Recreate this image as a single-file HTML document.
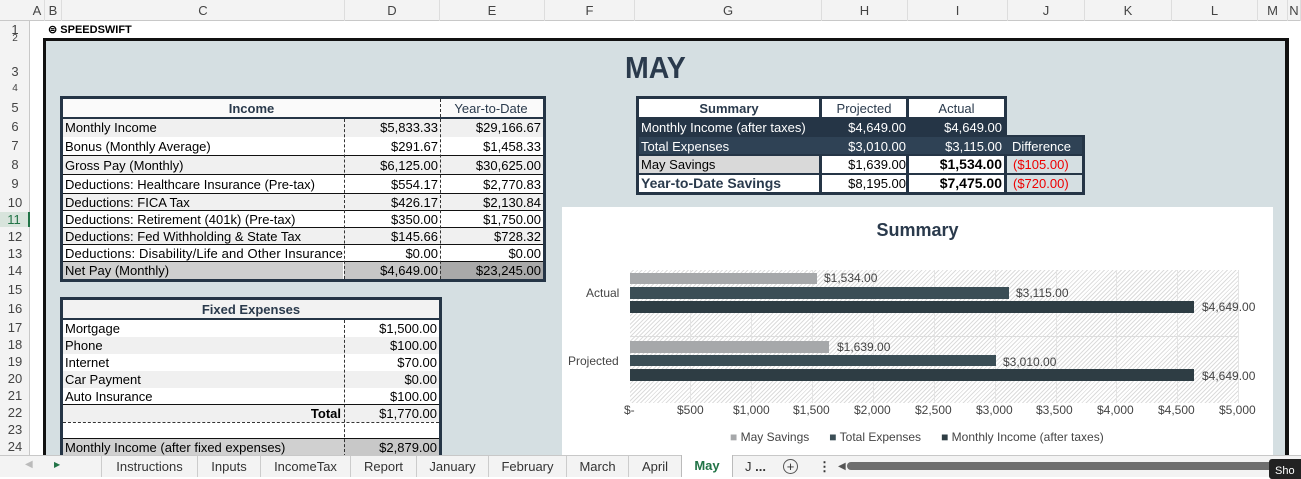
<!DOCTYPE html>
<html><head><meta charset="utf-8"><style>
*{margin:0;padding:0;box-sizing:border-box}
body{width:1301px;height:477px;overflow:hidden;background:#fff;font-family:"Liberation Sans",Arial,sans-serif;position:relative;font-size:13px;color:#000}
.a{position:absolute;white-space:nowrap}
.ch{position:absolute;top:0;height:21px;line-height:21px;text-align:center;color:#444;font-size:13px;border-right:1px solid #ddd}
.rn{position:absolute;left:0;width:30px;text-align:center;color:#444;font-size:13px}
.r{position:absolute;height:19px;line-height:19px;font-size:13px}
.t{position:absolute;white-space:nowrap;line-height:17px;font-size:13px}
.num{text-align:right}
.nar{font-family:"Liberation Sans Narrow","Liberation Sans",sans-serif}
</style></head><body>
<!-- column header -->
<div class="a" style="left:0;top:0;width:1301px;height:21px;background:#f3f3f3;border-bottom:1px solid #c8c8c8"></div>
<div class="ch" style="left:30px;width:15px">A</div>
<div class="ch" style="left:45px;width:17px">B</div>
<div class="ch" style="left:62px;width:283px">C</div>
<div class="ch" style="left:345px;width:95px">D</div>
<div class="ch" style="left:440px;width:105px">E</div>
<div class="ch" style="left:545px;width:90px">F</div>
<div class="ch" style="left:635px;width:187px">G</div>
<div class="ch" style="left:822px;width:86px">H</div>
<div class="ch" style="left:908px;width:100px">I</div>
<div class="ch" style="left:1008px;width:77px">J</div>
<div class="ch" style="left:1085px;width:87px">K</div>
<div class="ch" style="left:1172px;width:86px">L</div>
<div class="ch" style="left:1258px;width:30px">M</div>
<div class="ch" style="left:1288px;width:13px">N</div>
<!-- row numbers -->
<div class="a" style="left:0;top:21px;width:30px;height:434px;background:#f3f3f3;border-right:1px solid #c8c8c8"></div>
<div class="rn" style="top:22px">1</div><div class="rn" style="top:33px;font-size:10px;height:8px;overflow:hidden">2</div>
<div class="rn" style="top:64px">3</div><div class="rn" style="top:83px;font-size:10px;height:8px;overflow:hidden">4</div>
<div class="rn" style="top:100px">5</div><div class="rn" style="top:119px">6</div><div class="rn" style="top:138px">7</div><div class="rn" style="top:157px">8</div><div class="rn" style="top:176px">9</div><div class="rn" style="top:195px">10</div>
<div class="rn" style="top:212px;color:#217346;background:#d8e4dc;border-right:2px solid #217346">11</div>
<div class="rn" style="top:229px">12</div><div class="rn" style="top:246px">13</div><div class="rn" style="top:263px">14</div><div class="rn" style="top:282px">15</div><div class="rn" style="top:301px">16</div><div class="rn" style="top:320px">17</div><div class="rn" style="top:337px">18</div><div class="rn" style="top:354px">19</div><div class="rn" style="top:371px">20</div><div class="rn" style="top:388px">21</div><div class="rn" style="top:405px">22</div><div class="rn" style="top:422px">23</div><div class="rn" style="top:439px">24</div>
<!-- logo -->
<div class="a" style="left:48px;top:23px;font-size:11px;font-weight:bold">&#x229C; SPEEDSWIFT</div>
<!-- frame -->
<div class="a" style="left:43px;top:38px;width:1246px;height:430px;background:#d5dfe2;border:3px solid #111;border-bottom:none"></div>
<div class="a" style="left:625px;top:50px;font-size:31px;font-weight:bold;color:#2a3a4c;transform:scaleX(0.92);transform-origin:left">MAY</div>

<!-- Income table -->
<div class="a" style="left:60px;top:96px;width:486px;height:186px;background:#253546"></div>
<div class="a" style="left:63px;top:99px;width:480px;height:18px;background:#fafafa"></div>
<div class="t" style="left:63px;top:100px;width:377px;text-align:center;font-weight:bold;color:#2a3a4c">Income</div>
<div class="t" style="left:441px;top:100px;width:100px;text-align:center;color:#2a3a4c">Year-to-Date</div>
<div class="a" style="left:440px;top:99px;height:18px;border-left:1px dashed #333"></div>
<div class="a" style="left:63px;top:119px;width:480px;height:160px;background:#fff"></div>
<div class="a" style="left:63px;top:119px;width:480px;height:18px;background:#f0f0f0"></div>
<div class="a" style="left:63px;top:156px;width:480px;height:19px;background:#f0f0f0"></div>
<div class="a" style="left:63px;top:194px;width:480px;height:17px;background:#f0f0f0"></div>
<div class="a" style="left:63px;top:228px;width:480px;height:17px;background:#f0f0f0"></div>
<div class="a" style="left:63px;top:262px;width:280px;height:17px;background:#cfcfcf"></div>
<div class="a" style="left:344px;top:262px;width:96px;height:17px;background:#c6c6c6"></div>
<div class="a" style="left:440px;top:262px;width:103px;height:17px;background:#a9a9a9"></div>
<div class="a" style="left:63px;top:155px;width:480px;border-top:1px solid #111"></div>
<div class="a" style="left:63px;top:174px;width:480px;border-top:1px solid #111"></div>
<div class="a" style="left:63px;top:193px;width:480px;border-top:1px solid #111"></div>
<div class="a" style="left:63px;top:210px;width:480px;border-top:1px solid #111"></div>
<div class="a" style="left:63px;top:227px;width:480px;border-top:1px solid #111"></div>
<div class="a" style="left:63px;top:244px;width:480px;border-top:1px solid #111"></div>
<div class="a" style="left:63px;top:261px;width:480px;border-top:1px solid #111"></div>
<div class="a" style="left:344px;top:119px;height:160px;border-left:1px dashed #333"></div>
<div class="a" style="left:440px;top:119px;height:160px;border-left:1px dashed #333"></div>
<div class="t" style="left:65px;top:119px">Monthly Income</div><div class="t num" style="left:344px;top:119px;width:94px">$5,833.33</div><div class="t num" style="left:441px;top:119px;width:100px">$29,166.67</div>
<div class="t" style="left:65px;top:138px">Bonus (Monthly Average)</div><div class="t num" style="left:344px;top:138px;width:94px">$291.67</div><div class="t num" style="left:441px;top:138px;width:100px">$1,458.33</div>
<div class="t" style="left:65px;top:157px">Gross Pay (Monthly)</div><div class="t num" style="left:344px;top:157px;width:94px">$6,125.00</div><div class="t num" style="left:441px;top:157px;width:100px">$30,625.00</div>
<div class="t" style="left:65px;top:176px">Deductions: Healthcare Insurance (Pre-tax)</div><div class="t num" style="left:344px;top:176px;width:94px">$554.17</div><div class="t num" style="left:441px;top:176px;width:100px">$2,770.83</div>
<div class="t" style="left:65px;top:194px">Deductions: FICA Tax</div><div class="t num" style="left:344px;top:194px;width:94px">$426.17</div><div class="t num" style="left:441px;top:194px;width:100px">$2,130.84</div>
<div class="t" style="left:65px;top:211px">Deductions: Retirement (401k) (Pre-tax)</div><div class="t num" style="left:344px;top:211px;width:94px">$350.00</div><div class="t num" style="left:441px;top:211px;width:100px">$1,750.00</div>
<div class="t" style="left:65px;top:228px">Deductions: Fed Withholding &amp; State Tax</div><div class="t num" style="left:344px;top:228px;width:94px">$145.66</div><div class="t num" style="left:441px;top:228px;width:100px">$728.32</div>
<div class="t" style="left:65px;top:245px;width:278px;overflow:hidden;letter-spacing:0.15px">Deductions: Disability/Life and Other Insurance</div><div class="t num" style="left:344px;top:245px;width:94px">$0.00</div><div class="t num" style="left:441px;top:245px;width:100px">$0.00</div>
<div class="t" style="left:65px;top:262px">Net Pay (Monthly)</div><div class="t num" style="left:344px;top:262px;width:94px">$4,649.00</div><div class="t num" style="left:441px;top:262px;width:100px">$23,245.00</div>

<!-- Fixed expenses -->
<div class="a" style="left:60px;top:297px;width:382px;height:160px;background:#253546"></div>
<div class="a" style="left:63px;top:300px;width:376px;height:18px;background:#f2f2f2"></div>
<div class="t" style="left:63px;top:301px;width:376px;text-align:center;font-weight:bold;color:#2a3a4c">Fixed Expenses</div>
<div class="a" style="left:63px;top:320px;width:376px;height:137px;background:#fff"></div>
<div class="a" style="left:63px;top:337px;width:376px;height:17px;background:#f0f0f0"></div>
<div class="a" style="left:63px;top:371px;width:376px;height:17px;background:#f0f0f0"></div>
<div class="a" style="left:63px;top:405px;width:376px;height:17px;background:#f0f0f0"></div>
<div class="a" style="left:63px;top:439px;width:281px;height:18px;background:#d0d0d0"></div>
<div class="a" style="left:344px;top:439px;width:95px;height:18px;background:#c8c8c8"></div>
<div class="a" style="left:63px;top:404px;width:376px;border-top:1px solid #111"></div>
<div class="a" style="left:63px;top:422px;width:376px;border-top:1px dashed #333"></div>
<div class="a" style="left:63px;top:438px;width:376px;border-top:1px solid #111"></div>
<div class="a" style="left:344px;top:320px;height:137px;border-left:1px dashed #333"></div>
<div class="t" style="left:65px;top:320px">Mortgage</div><div class="t num" style="left:344px;top:320px;width:93px">$1,500.00</div>
<div class="t" style="left:65px;top:337px">Phone</div><div class="t num" style="left:344px;top:337px;width:93px">$100.00</div>
<div class="t" style="left:65px;top:354px">Internet</div><div class="t num" style="left:344px;top:354px;width:93px">$70.00</div>
<div class="t" style="left:65px;top:371px">Car Payment</div><div class="t num" style="left:344px;top:371px;width:93px">$0.00</div>
<div class="t" style="left:65px;top:388px">Auto Insurance</div><div class="t num" style="left:344px;top:388px;width:93px">$100.00</div>
<div class="t num" style="left:65px;top:405px;width:276px;font-weight:bold">Total</div><div class="t num" style="left:344px;top:405px;width:93px">$1,770.00</div>
<div class="t" style="left:65px;top:439px">Monthly Income (after fixed expenses)</div><div class="t num" style="left:344px;top:439px;width:93px">$2,879.00</div>

<!-- Summary table -->
<div class="a" style="left:636px;top:96px;width:371px;height:40px;background:#253546"></div>
<div class="a" style="left:636px;top:135px;width:449px;height:60px;background:#253546"></div>
<div class="a" style="left:639px;top:99px;width:180px;height:18px;background:#fff"></div>
<div class="a" style="left:822px;top:99px;width:84px;height:18px;background:#fff"></div>
<div class="a" style="left:909px;top:99px;width:95px;height:18px;background:#fff"></div>
<div class="a" style="left:639px;top:156px;width:180px;height:17px;background:#d9d9d9"></div>
<div class="a" style="left:822px;top:156px;width:84px;height:17px;background:#fff"></div>
<div class="a" style="left:909px;top:156px;width:95px;height:17px;background:#fff"></div>
<div class="a" style="left:1007px;top:156px;width:75px;height:17px;background:#d5dfe2"></div>
<div class="a" style="left:639px;top:175px;width:180px;height:17px;background:#fff"></div>
<div class="a" style="left:822px;top:175px;width:84px;height:17px;background:#fff"></div>
<div class="a" style="left:909px;top:175px;width:95px;height:17px;background:#fff"></div>
<div class="a" style="left:1007px;top:175px;width:75px;height:17px;background:#d5dfe2"></div>
<div class="a" style="left:639px;top:137px;width:443px;height:17px;background:#2f4255"></div>
<div class="t" style="left:639px;top:100px;width:180px;text-align:center;font-weight:bold;color:#2a3a4c">Summary</div>
<div class="t" style="left:822px;top:100px;width:84px;text-align:center;color:#2a3a4c">Projected</div>
<div class="t" style="left:909px;top:100px;width:95px;text-align:center;color:#2a3a4c">Actual</div>
<div class="t" style="left:641px;top:119px;color:#fff">Monthly Income (after taxes)</div><div class="t num" style="left:822px;top:119px;width:84px;color:#fff">$4,649.00</div><div class="t num" style="left:909px;top:119px;width:93px;color:#fff">$4,649.00</div>
<div class="t" style="left:641px;top:138px;color:#fff">Total Expenses</div><div class="t num" style="left:822px;top:138px;width:84px;color:#fff">$3,010.00</div><div class="t num" style="left:909px;top:138px;width:93px;color:#fff">$3,115.00</div><div class="t" style="left:1012px;top:138px;color:#fff">Difference</div>
<div class="t" style="left:641px;top:156px">May Savings</div><div class="t num" style="left:822px;top:156px;width:84px">$1,639.00</div><div class="t num" style="left:909px;top:156px;width:93px;font-weight:bold;font-size:14px">$1,534.00</div><div class="t" style="left:1013px;top:156px;color:#e00">($105.00)</div>
<div class="t" style="left:641px;top:175px;font-weight:bold;color:#2a3a4c;font-size:14px">Year-to-Date Savings</div><div class="t num" style="left:822px;top:175px;width:84px">$8,195.00</div><div class="t num" style="left:909px;top:175px;width:93px;font-weight:bold;font-size:14px">$7,475.00</div><div class="t" style="left:1013px;top:175px;color:#e00">($720.00)</div>

<!-- Chart -->
<div class="a" style="left:562px;top:207px;width:711px;height:250px;background:#fff"></div>
<div class="a" style="left:562px;top:220px;width:711px;text-align:center;font-size:18px;font-weight:bold;color:#2a3a4c">Summary</div>
<div class="a" style="left:630px;top:270px;width:608px;height:133px;background:repeating-linear-gradient(135deg,#fff 0 2px,#dcdcdc 2px 3px)"></div>
<div class="a" style="left:630px;top:336px;width:608px;border-top:1px solid #ddd"></div>
<div class="a" style="left:690px;top:270px;height:133px;border-left:1px solid #e4e4e4"></div>
<div class="a" style="left:751px;top:270px;height:133px;border-left:1px solid #e4e4e4"></div>
<div class="a" style="left:812px;top:270px;height:133px;border-left:1px solid #e4e4e4"></div>
<div class="a" style="left:873px;top:270px;height:133px;border-left:1px solid #e4e4e4"></div>
<div class="a" style="left:934px;top:270px;height:133px;border-left:1px solid #e4e4e4"></div>
<div class="a" style="left:995px;top:270px;height:133px;border-left:1px solid #e4e4e4"></div>
<div class="a" style="left:1056px;top:270px;height:133px;border-left:1px solid #e4e4e4"></div>
<div class="a" style="left:1116px;top:270px;height:133px;border-left:1px solid #e4e4e4"></div>
<div class="a" style="left:1177px;top:270px;height:133px;border-left:1px solid #e4e4e4"></div>
<div class="a" style="left:1238px;top:270px;height:133px;border-left:1px solid #e4e4e4"></div>
<div class="a" style="left:630px;top:273px;width:187px;height:11px;background:#a6a8aa"></div>
<div class="a" style="left:630px;top:287px;width:379px;height:12px;background:#3b4e56"></div>
<div class="a" style="left:630px;top:301px;width:564px;height:12px;background:#2e3d44"></div>
<div class="a" style="left:630px;top:341px;width:199px;height:12px;background:#a6a8aa"></div>
<div class="a" style="left:630px;top:355px;width:366px;height:11px;background:#3b4e56"></div>
<div class="a" style="left:630px;top:369px;width:564px;height:12px;background:#2e3d44"></div>
<div class="a nar" style="left:824px;top:271px;font-size:12px;color:#444">$1,534.00</div>
<div class="a nar" style="left:1016px;top:286px;font-size:12px;color:#444">$3,115.00</div>
<div class="a nar" style="left:1202px;top:300px;font-size:12px;color:#444">$4,649.00</div>
<div class="a nar" style="left:837px;top:340px;font-size:12px;color:#444">$1,639.00</div>
<div class="a nar" style="left:1003px;top:355px;font-size:12px;color:#444">$3,010.00</div>
<div class="a nar" style="left:1202px;top:369px;font-size:12px;color:#444">$4,649.00</div>
<div class="a nar" style="left:586px;top:286px;font-size:12px;color:#444">Actual</div>
<div class="a nar" style="left:568px;top:354px;font-size:12px;color:#444">Projected</div>
<div class="a nar" style="left:610px;top:403px;width:652px;font-size:12px;color:#444;height:14px">
<span class="a" style="left:14px">$-</span><span class="a" style="left:67px">$500</span><span class="a" style="left:123px">$1,000</span><span class="a" style="left:183px">$1,500</span><span class="a" style="left:244px">$2,000</span><span class="a" style="left:305px">$2,500</span><span class="a" style="left:366px">$3,000</span><span class="a" style="left:426px">$3,500</span><span class="a" style="left:487px">$4,000</span><span class="a" style="left:548px">$4,500</span><span class="a" style="left:609px">$5,000</span></div>
<div class="a nar" style="left:730px;top:430px;font-size:12px;color:#444"><span style="color:#a6a8aa">&#9632;</span> May Savings &nbsp;&nbsp;&nbsp;&nbsp; <span style="color:#3b4e56">&#9632;</span> Total Expenses &nbsp;&nbsp;&nbsp;&nbsp; <span style="color:#2e3d44">&#9632;</span> Monthly Income (after taxes)</div>
<div class="a" style="left:1285px;top:38px;width:3px;height:420px;background:#111"></div>

<!-- tab bar -->
<div class="a" style="left:0;top:455px;width:1301px;height:22px;background:#f3f3f3;border-top:1px solid #c8c8c8"></div>
<div class="a" style="left:25px;top:459px;color:#bbb;font-size:10px">&#9664;</div>
<div class="a" style="left:54px;top:460px;color:#217346;font-size:8px">&#9654;</div>
<div class="a" style="top:456px;left:0;height:21px;font-size:13px;color:#333;line-height:21px">
<span class="a" style="left:101px;width:96px;text-align:center;border-left:1px solid #ccc">Instructions</span>
<span class="a" style="left:197px;width:63px;text-align:center;border-left:1px solid #ccc">Inputs</span>
<span class="a" style="left:260px;width:90px;text-align:center;border-left:1px solid #ccc">IncomeTax</span>
<span class="a" style="left:350px;width:66px;text-align:center;border-left:1px solid #ccc">Report</span>
<span class="a" style="left:416px;width:72px;text-align:center;border-left:1px solid #ccc">January</span>
<span class="a" style="left:488px;width:78px;text-align:center;border-left:1px solid #ccc">February</span>
<span class="a" style="left:566px;width:62px;text-align:center;border-left:1px solid #ccc">March</span>
<span class="a" style="left:628px;width:53px;text-align:center;border-left:1px solid #ccc">April</span>
<span class="a" style="left:681px;width:52px;text-align:center;background:#fff;color:#217346;font-weight:bold;top:-1px;height:22px;border-left:1px solid #bbb;border-right:1px solid #bbb">May</span>
<span class="a" style="left:745px">J <b>...</b></span>
<span class="a" style="left:783px;top:3px;width:15px;height:15px;border:1px solid #555;border-radius:50%;line-height:13px;text-align:center;font-size:13px">+</span>
<span class="a" style="left:818px;font-weight:bold">&#8942;</span>
<span class="a" style="left:838px;font-size:10px;color:#555">&#9664;</span>
</div>
<div class="a" style="left:847px;top:462px;width:430px;height:8px;background:#6e6e6e;border-radius:4px"></div>
<div class="a" style="left:1269px;top:459px;width:40px;height:20px;background:#222;border-radius:3px;color:#fff;font-size:11px;padding:6px 0 0 6px">Sho</div>
</body></html>
